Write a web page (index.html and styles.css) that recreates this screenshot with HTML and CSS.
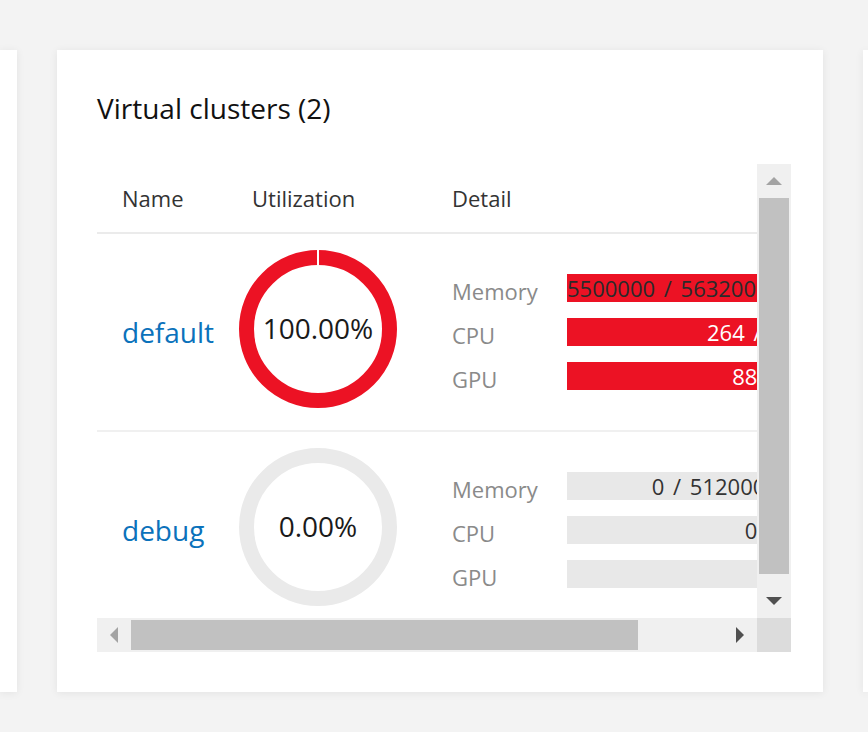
FILE: index.html
```html
<!DOCTYPE html>
<html lang="en">
<head>
<meta charset="utf-8">
<title>Virtual clusters</title>
<link rel="stylesheet" href="styles.css">
</head>
<body>
<div class="page">
  <div class="card card-side"></div>
  <section class="card card-main">
    <h2 class="title">Virtual clusters (2)</h2>
    <div class="frame">
      <div class="viewport">
        <div class="table">
          <div class="row head">
            <div class="cell c-name">Name</div>
            <div class="cell c-util">Utilization</div>
            <div class="cell c-detail">Detail</div>
          </div>
          <div class="row">
            <div class="cell c-name"><a class="vc-link" href="#">default</a></div>
            <div class="cell c-util">
              <div class="donut">
                <svg width="160" height="160" viewBox="0 0 160 160">
                  <circle cx="80" cy="80" r="71.5" fill="none" stroke="#ec1224" stroke-width="15"/>
                  <line x1="80" y1="0" x2="80" y2="16.5" stroke="#ffffff" stroke-width="2"/>
                </svg>
                <span class="donut-text">100.00%</span>
              </div>
            </div>
            <div class="cell c-detail">
              <div class="detail">
                <span class="lbl">Memory</span><div class="bar full dark">5500000 / 5632000 MB</div>
                <span class="lbl">CPU</span><div class="bar full">264 / 264</div>
                <span class="lbl">GPU</span><div class="bar full">88 / 88</div>
              </div>
            </div>
          </div>
          <div class="row">
            <div class="cell c-name"><a class="vc-link" href="#">debug</a></div>
            <div class="cell c-util">
              <div class="donut">
                <svg width="160" height="160" viewBox="0 0 160 160">
                  <circle cx="80" cy="80" r="71.5" fill="none" stroke="#eaeaea" stroke-width="15"/>
                </svg>
                <span class="donut-text">0.00%</span>
              </div>
            </div>
            <div class="cell c-detail">
              <div class="detail">
                <span class="lbl">Memory</span><div class="bar empty">0 / 512000 MB</div>
                <span class="lbl">CPU</span><div class="bar empty">0 / 24</div>
                <span class="lbl">GPU</span><div class="bar empty">0 / 0</div>
              </div>
            </div>
          </div>
        </div>
      </div>
      <div class="vbar">
        <div class="sbtn"><span class="tri up"></span></div>
        <div class="vthumb"></div>
        <div class="spacer"></div>
        <div class="sbtn"><span class="tri down"></span></div>
      </div>
      <div class="hbar">
        <div class="sbtn"><span class="tri left"></span></div>
        <div class="hthumb"></div>
        <div class="spacer"></div>
        <div class="sbtn"><span class="tri right"></span></div>
      </div>
      <div class="corner"></div>
    </div>
  </section>
  <div class="card card-side"></div>
</div>
</body>
</html>
```

FILE: styles.css
```css
* { box-sizing: border-box; }

html, body {
  margin: 0;
  padding: 0;
  background: #ffffff;
  font-family: "Open Sans", "Noto Sans", sans-serif;
}

.page {
  height: 732px;
  background: #f3f3f3;
  display: grid;
  grid-template-columns: 17px 766px 1fr;
  column-gap: 40px;
  padding-top: 50px;
  overflow: hidden;
}

.card {
  background: #ffffff;
  height: 642px;
  box-shadow: 0 1px 8px rgba(0, 0, 0, 0.07);
}

.card-main {
  padding: 40px 32px 0 40px;
}

.title {
  margin: 0 0 36px 0;
  font-size: 28px;
  line-height: 36px;
  font-weight: 400;
  color: #111111;
  padding-bottom: 2px;
}

.frame {
  display: grid;
  grid-template-columns: 660px 34px;
  grid-template-rows: 454px 34px;
  width: 694px;
}

.viewport {
  overflow: hidden;
  background: #ffffff;
}

.table {
  width: 771px;
}

.row {
  display: grid;
  grid-template-columns: 130px 200px 1fr;
  align-items: center;
  height: 198px;
  border-bottom: 2px solid #f0f0f0;
}

.row.head {
  height: 70px;
  border-bottom: 2px solid #ebebeb;
  font-size: 22px;
  color: #333333;
}

.cell {
  padding-left: 25px;
}

.row .c-util {
  padding-left: 11px;
}

.row.head .c-util {
  padding-left: 25px;
}

.vc-link {
  color: #0b72bb;
  text-decoration: none;
  font-size: 28px;
}

.donut {
  display: grid;
  width: 160px;
  height: 160px;
  margin-bottom: 7px;
  place-items: center;
}

.donut svg,
.donut-text {
  grid-area: 1 / 1;
}

.donut svg {
  display: block;
}

.donut-text {
  font-size: 28px;
  color: #1a1a1a;
  margin-bottom: 2px;
}

.detail {
  display: grid;
  grid-template-columns: 115px 246px;
  row-gap: 16px;
  align-items: center;
}

.lbl {
  font-size: 22px;
  color: #8a8a8a;
  line-height: 28px;
  margin-top: 3px;
  margin-bottom: -3px;
}

.bar {
  height: 28px;
  line-height: 28px;
  font-size: 22px;
  word-spacing: 3px;
  text-align: right;
  white-space: nowrap;
  padding-right: 5px;
}

.bar.full {
  background: #ec1224;
  color: #ffffff;
}

.bar.full.dark {
  color: #2a2a2a;
}

.bar.empty {
  background: #e8e8e8;
  color: #333333;
}

.vbar {
  background: #f0f0f0;
  display: flex;
  flex-direction: column;
}

.hbar {
  background: #f0f0f0;
  display: flex;
}

.corner {
  background: #dcdcdc;
}

.sbtn {
  width: 34px;
  height: 34px;
  flex: none;
  display: flex;
  align-items: center;
  justify-content: center;
}

.spacer {
  flex: 1;
}

.vthumb {
  margin: 0 2px;
  height: 376px;
  background: #c1c1c1;
}

.hthumb {
  margin: 2px 0;
  width: 507px;
  background: #c1c1c1;
}

.tri {
  width: 0;
  height: 0;
}

.tri.up {
  border-left: 8px solid transparent;
  border-right: 8px solid transparent;
  border-bottom: 8px solid #a3a3a3;
}

.tri.down {
  border-left: 8px solid transparent;
  border-right: 8px solid transparent;
  border-top: 8px solid #505050;
}

.tri.left {
  border-top: 8px solid transparent;
  border-bottom: 8px solid transparent;
  border-right: 8px solid #a3a3a3;
}

.tri.right {
  border-top: 8px solid transparent;
  border-bottom: 8px solid transparent;
  border-left: 8px solid #505050;
}
```
